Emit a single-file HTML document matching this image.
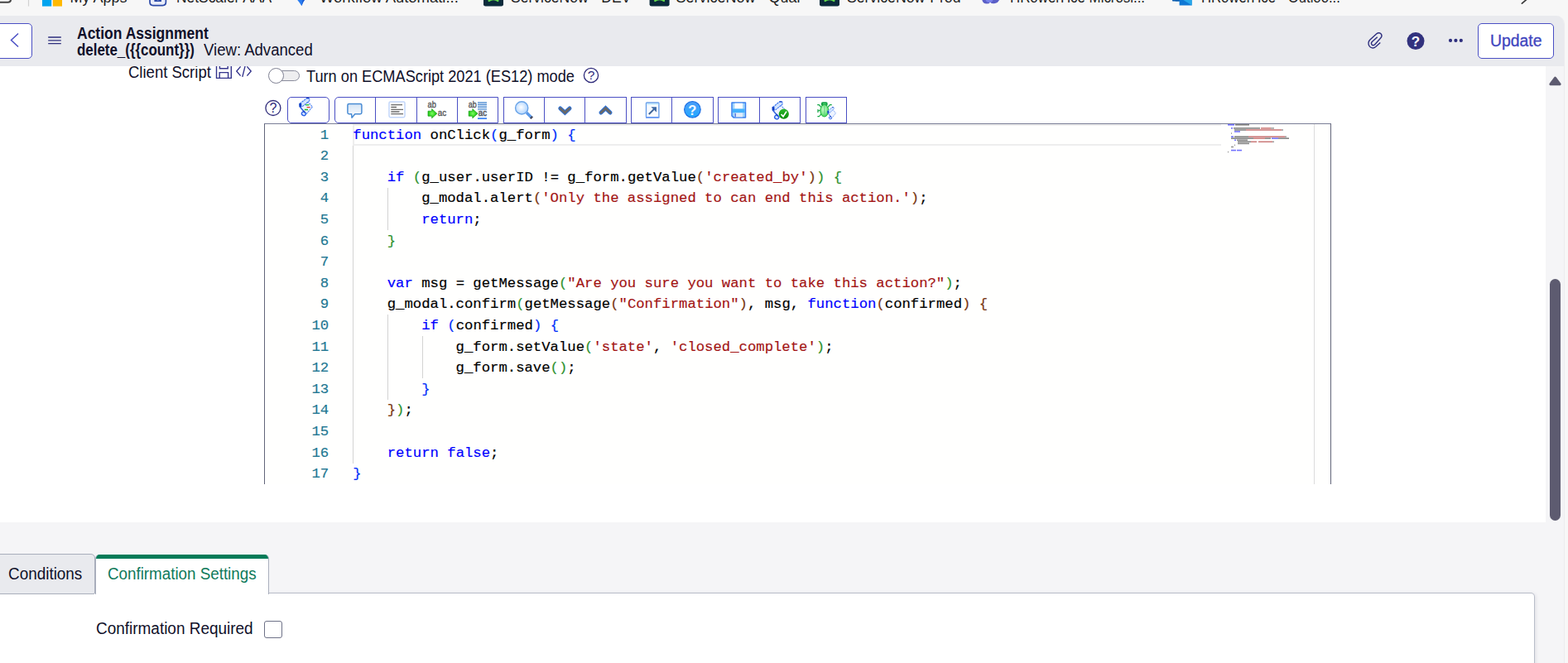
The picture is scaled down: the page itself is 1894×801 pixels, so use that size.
<!DOCTYPE html>
<html lang="en">
<head>
<meta charset="utf-8">
<title>Action Assignment</title>
<style>
*{box-sizing:border-box;margin:0;padding:0}
html,body{width:1894px;height:801px;overflow:hidden;background:#f7f7f7}
body{position:relative;font-family:"Liberation Sans",sans-serif;color:#10102a;-webkit-font-smoothing:antialiased}
.abs{position:absolute}
/* bookmark bar */
#bm{left:0;top:0;width:1894px;height:19px;background:#f7f7f7;overflow:hidden}
#bm span{position:absolute;top:-13.4px;font-size:18px;line-height:20px;color:#1f1f1f;white-space:nowrap;transform-origin:0 0}
/* page */
#page{left:0;top:19px;width:1890px;height:782px;background:#f5f5f7;border-top-right-radius:10px;overflow:hidden;border-right:1px solid #ececef}
#hdr{left:0;top:0;width:1890px;height:61px;background:#e9eaee}
#white{left:0;top:61px;width:1867px;height:551px;background:#fff}
.btn{background:#fff;border:1.4px solid #4a4fc4;border-radius:5px}
.t{white-space:nowrap;line-height:20px;font-size:19.6px;transform-origin:0 0}
/* toolbar */
.tb{top:98px;height:32px;border:1px solid #4a4fc4;background:#fff}
.tb i{position:absolute;top:0;bottom:0;width:1px;background:#4a4fc4}
/* editor */
#ed{left:319px;top:130px;width:1289px;height:436px;background:#fffffe;border-left:1px solid #62667a;border-right:1px solid #62667a;border-top:1px solid #7a7e96;overflow:hidden}
#code{left:0;top:0.7px;font-family:"Liberation Mono",monospace;font-size:17.28px;line-height:25.6px;white-space:pre;color:#000;-webkit-text-stroke:0.18px}
#code div{height:25.6px}
.ln{display:inline-block;width:77.2px;text-align:right;color:#237893;margin-right:29.1px}
.k{color:#0000ff}.s{color:#a31515}.b1{color:#0431fa}.b2{color:#319331}.b3{color:#7b3814}
.g{position:absolute;width:1px;background:#d3d3d3}
</style>
</head>
<body>
<div id="bm" class="abs">
 <svg class="abs" style="left:0;top:0" width="1894" height="19" viewBox="0 0 1894 19">
  <path d="M-2 -3 V0.6 Q-2 2.8 1 2.8 H9.6 Q13 2.8 13 -0.6 V-3" fill="none" stroke="#454545" stroke-width="2"/>
  <path d="M34.5 0V7.6" stroke="#d2d2d2" stroke-width="1.2"/>
  <rect x="51" y="-4" width="11.2" height="11.6" fill="#00a4ef"/><rect x="63.8" y="-4" width="11.2" height="11.6" fill="#ffb900"/>
  <path d="M181 -3 V2.6 Q181 6.6 185 6.6 H196.4 Q200.4 6.6 200.4 2.6 V-3" fill="#e8ecfa" stroke="#2c4aa8" stroke-width="1.7"/>
  <rect x="186.4" y="-3" width="8.6" height="5" fill="#2c4aa8"/><rect x="189.8" y="-3" width="1.8" height="3.4" fill="#e8ecfa"/>
  <path d="M357 -3 L362 3.6 L364.4 7.2 L366 3 L370 -3 Z" fill="#2a7cf0"/>
  <path d="M364.4 7.2 L366 3 L370 -3 L366 -3 Z" fill="#1a5ad0"/>
  <g id="snow"><path d="M584 -4 V5.2 Q584 7.6 586.4 7.6 H605.6 Q608 7.6 608 5.2 V-4 Z" fill="#0b2b3c"/><path d="M589.6 -4 V1 Q589.6 2.6 591 2 Q596 -1.4 601 2 Q602.4 2.6 602.4 1 V-4 Z" fill="#62d84e"/></g>
  <use href="#snow" x="200.6"/><use href="#snow" x="406"/>
  <path d="M1186 -3 Q1186 4.6 1192 4.6 Q1195 4.6 1196 2.4 Q1198 5.2 1202 4 Q1207.6 2.6 1207.6 -3 Z" fill="#5b5fc7"/>
  <path d="M1190 -3 Q1190 3 1195 3 Q1200 3 1200 -3 Z" fill="#7b83eb"/>
  <path d="M1416 -3 L1420 1.6 L1424.6 1.6 V6.4 H1439.6 V-3 Z" fill="#0f78d4"/>
  <path d="M1424.6 -3 L1439.6 6.4 V-3 Z" fill="#28a8ea"/>
  <path d="M1416 -3 V0.4 Q1416 1.6 1417.4 1.6 H1424.6 V-3 Z" fill="#0a5cad"/>
  <path d="M1846 -2.4 L1838.4 4.2" stroke="#3a3a3a" stroke-width="1.7" stroke-linecap="round"/>
 </svg>
 <span style="left:84.4px">My Apps</span>
 <span style="left:212.5px;transform:scaleX(.966)">NetScaler AAA</span>
 <span style="left:386px;transform:scaleX(1.025)">Workflow Automati...</span>
 <span style="left:616.5px;transform:scaleX(.975)">ServiceNow - DEV</span>
 <span style="left:816.5px">ServiceNow - Qual</span>
 <span style="left:1022.5px;transform:scaleX(.982)">ServiceNow-Prod</span>
 <span style="left:1220.3px;transform:scaleX(.937)">HRowerHce Microsi...</span>
 <span style="left:1451px;transform:scaleX(.927)">HRowerHce - Outloo...</span>
</div>

<div id="page" class="abs">
 <div id="white" class="abs"></div>

 <!-- field label row -->
 <div class="abs t" style="left:154.6px;top:57.8px;transform:scaleX(0.9452)" id="t5">Client Script</div>
 <div class="abs t" style="left:370.3px;top:63.1px;transform:scaleX(0.9287)" id="t6">Turn on ECMAScript 2021 (ES12) mode</div>
 <!-- label icons + toggle (under header) -->
 <svg class="abs" style="left:258px;top:54px" width="50" height="24" viewBox="258 73 50 24">
  <path d="M261.5 75 H276.4 L279.3 77.8 V94.4 H261.5 Z" fill="none" stroke="#34348c" stroke-width="1.4" stroke-linejoin="round"/>
  <path d="M265.4 75.2 V82.8 H275.2 V75.2" fill="none" stroke="#34348c" stroke-width="1.4"/>
  <path d="M265.2 94.2 V87.6 H275.6 V94.2" fill="none" stroke="#34348c" stroke-width="1.4"/>
  <path d="M290.6 80.4 L285.8 86 L290.6 91.6 M298.4 80.4 L303.2 86 L298.4 91.6 M296.2 79.4 L292.8 92.8" fill="none" stroke="#34348c" stroke-width="1.4"/>
 </svg>
 <div class="abs" style="left:330px;top:66px;width:32px;height:13px;border-radius:7px;background:#eeeef0;border:1px solid #8a8c9c"></div>
 <div class="abs" style="left:324px;top:63px;width:19.4px;height:19.4px;border-radius:50%;background:#fff;border:1.2px solid #7e8092"></div>
 <svg class="abs" style="left:702px;top:61px" width="24" height="22" viewBox="702 80 24 22">
  <circle cx="714" cy="91" r="8.6" fill="none" stroke="#2e2a7a" stroke-width="1.3"/>
  <text x="714" y="96.4" text-anchor="middle" font-family="Liberation Sans, sans-serif" font-size="15.5" fill="#2e2a7a">?</text>
 </svg>
 <!-- header -->
 <div id="hdr" class="abs"></div>
 <div class="abs btn" style="left:-6px;top:9px;width:45px;height:43px"></div>
 <svg class="abs" style="left:10px;top:19px" width="16" height="22" viewBox="0 0 16 22"><path d="M12 2.5 L3.5 10.5 L12 18.5" fill="none" stroke="#4a4fc4" stroke-width="1.5"/></svg>
 <svg class="abs" style="left:58px;top:24px" width="16" height="12" viewBox="0 0 16 12"><path d="M0.2 2H15.8M0.2 5.9H15.8M0.2 9.7H15.8" stroke="#2e2f7e" stroke-width="1.3"/></svg>
 <div class="abs t" style="left:93.2px;top:11.0px;font-weight:bold;transform:scaleX(0.8928)" id="t1">Action Assignment</div>
 <div class="abs t" style="left:93.2px;top:31.2px;font-weight:bold;transform:scaleX(0.8628)" id="t2">delete_({{count}})</div>
 <div class="abs t" style="left:246px;top:31.2px;transform:scaleX(0.9471)" id="t3">View: Advanced</div>

 <div class="abs btn" style="left:1785px;top:9px;width:92px;height:43px"></div>
 <div class="abs t" style="left:1800px;top:20.0px;color:#4045be;-webkit-text-stroke:0.3px;transform:scaleX(0.9888)" id="t4">Update</div>


 <svg class="abs" style="left:1645px;top:14px" width="130" height="34" viewBox="1645 33 130 34">
  <path d="M1667.1 51.2 L1661.3 56.6 C1658.5 59 1654.5 58.3 1653 55.5 C1651.6 52.8 1651.9 50 1653.8 47.8 L1662.4 39.9 C1664.5 38.2 1667.3 38.6 1668.4 40.6 C1669.4 42.4 1668.8 44.2 1667.5 45.4 L1660.2 53.6 C1659 54.9 1657.4 55 1656.4 53.9 C1655.4 52.7 1655.6 51.2 1656.6 50.2 L1663.4 44.2" fill="none" stroke="#2e2f7e" stroke-width="1.45" transform="translate(1660.9 48.6) scale(.95) translate(-1660.4 -48.2)"/>
  <circle cx="1710" cy="49.6" r="10.5" fill="#32327e"/>
  <text x="1710" y="56" text-anchor="middle" font-family="Liberation Sans, sans-serif" font-weight="bold" font-size="17" fill="#fff">?</text>
  <circle cx="1752" cy="48.9" r="2.1" fill="#2e2f7e"/><circle cx="1758.4" cy="48.9" r="2.1" fill="#2e2f7e"/><circle cx="1764.8" cy="48.9" r="2.1" fill="#2e2f7e"/>
 </svg>
 <!-- toolbar -->
 <div class="abs tb" style="left:347px;width:51px;border-radius:5px"></div>
 <div class="abs tb" style="left:404px;width:198px;border-top-left-radius:5px;border-bottom-left-radius:5px"><i style="left:48px"></i><i style="left:98px"></i><i style="left:147px"></i></div>
 <div class="abs tb" style="left:608px;width:149px"><i style="left:48px"></i><i style="left:97px"></i></div>
 <div class="abs tb" style="left:762px;width:100px"><i style="left:48px"></i></div>
 <div class="abs tb" style="left:867px;width:100px"><i style="left:49px"></i></div>
 <div class="abs tb" style="left:973px;width:50px"></div>

 <svg class="abs" style="left:315px;top:96px" width="715" height="36" viewBox="315 115 715 36" id="tbicons">
  <defs>
   <linearGradient id="gBub" x1="0" y1="0" x2="0" y2="1"><stop offset="0" stop-color="#d4e4f6"/><stop offset="1" stop-color="#ffffff"/></linearGradient>
   <radialGradient id="gLens" cx="0.45" cy="0.45" r="0.6"><stop offset="0" stop-color="#ffffff"/><stop offset="1" stop-color="#a8d0ff"/></radialGradient>
   <linearGradient id="gHelp" x1="0" y1="0" x2="0" y2="1"><stop offset="0" stop-color="#4a9cf8"/><stop offset="0.5" stop-color="#3aa4fc"/><stop offset="1" stop-color="#20a8ff"/></linearGradient>
   <radialGradient id="gArr" cx="0.45" cy="0.5" r="0.6"><stop offset="0" stop-color="#7cff60"/><stop offset="0.6" stop-color="#30d020"/><stop offset="1" stop-color="#0c9a0c"/></radialGradient>
   <radialGradient id="gBug" cx="0.45" cy="0.4" r="0.7"><stop offset="0" stop-color="#d8fad8"/><stop offset="0.55" stop-color="#7ce88a"/><stop offset="1" stop-color="#18c030"/></radialGradient>
   <linearGradient id="gChk" x1="0" y1="0" x2="0" y2="1"><stop offset="0" stop-color="#2eb82e"/><stop offset="1" stop-color="#068a06"/></linearGradient>
   <linearGradient id="gRoll" x1="0" y1="0" x2="1" y2="1"><stop offset="0" stop-color="#b8d4ff"/><stop offset="1" stop-color="#eef5ff"/></linearGradient>
   <g id="scroll">
    <path d="M10.5 4.5 L16.5 11 L7.5 21.5 L3 16 L1 10.5 Z" fill="#eef4ff"/>
    <path d="M10.5 4.5 L16.5 11 L7.5 21.5" fill="none" stroke="#5a8cf4" stroke-width="1.1" stroke-dasharray="2.2 0.8"/>
    <path d="M0.8 10.5 L6 16.5" fill="none" stroke="#2858d8" stroke-width="1.3"/>
    <path d="M1.2 7.2 L9.2 0.8 Q11.2 -0.2 12.6 1.4 Q13.6 3 12 4.4 L4.4 10.6 Q2.4 11 1.2 10.4 Z" fill="url(#gRoll)" stroke="#3a74f0" stroke-width="1.1" stroke-dasharray="2.4 0.7"/>
    <path d="M0.3 6.8 L3.2 7 L3.2 11.4 L0.3 10.8 Z" fill="#0c3cc4"/>
    <path d="M9.3 0.6 L12.3 0.6" stroke="#0c3cc4" stroke-width="1.2"/>
    <ellipse cx="5.8" cy="19.4" rx="2.5" ry="2.2" transform="rotate(25 5.8 19.4)" fill="#cfe0ff" stroke="#2a62e8" stroke-width="1.3"/>
    <path d="M5.4 16 L7.8 18" stroke="#1c48c8" stroke-width="1.6"/>
   </g>
  </defs>
  <!-- help outline -->
  <circle cx="329.9" cy="130.5" r="9" fill="none" stroke="#2e2a7a" stroke-width="1.3"/>
  <text x="329.9" y="136" text-anchor="middle" font-family="Liberation Sans, sans-serif" font-size="16" fill="#2e2a7a">?</text>
  <!-- 1 script -->
  <use href="#scroll" x="361" y="118"/>
  <path d="M369.2 126.8H373.4" stroke="#36c436" stroke-width="1.5"/>
  <path d="M370.6 129.6H374.6" stroke="#e83a20" stroke-width="1.4"/>
  <path d="M367.8 132.4H372" stroke="#22b822" stroke-width="1.5"/>
  <!-- 2 comment -->
  <path d="M421.6 125.4 H435.2 Q436.9 125.4 436.9 127.1 V136 Q436.9 137.7 435.2 137.7 H428.8 L425 142.2 L424.6 137.7 H421.6 Q419.9 137.7 419.9 136 V127.1 Q419.9 125.4 421.6 125.4 Z" fill="url(#gBub)" stroke="#4a8cd4" stroke-width="1.5" stroke-linejoin="round"/>
  <!-- 3 format -->
  <rect x="470" y="122.9" width="19" height="18.8" rx="1.6" fill="#fff" stroke="#c2d6fa" stroke-width="1.5"/>
  <path d="M472.3 126.6H486M472.3 129.5H479M472.3 132.3H487M472.3 135H482.5M472.3 137.7H487" stroke="#6a6a6a" stroke-width="1.3"/>
  <!-- 4 replace -->
  <g font-family="Liberation Sans, sans-serif" font-size="11" fill="#555" stroke="#555" stroke-width=".35">
   <text x="516.6" y="130" textLength="10.3" lengthAdjust="spacingAndGlyphs">ab</text>
   <text x="528.8" y="139.8" textLength="10.3" lengthAdjust="spacingAndGlyphs">ac</text>
  </g>
  <path d="M517 134.2 H521.6 V131.6 L527.8 137.2 L521.6 142.7 V140.2 H517 Z" fill="url(#gArr)" stroke="#12a012" stroke-width="0.7" stroke-linejoin="round"/>
  <!-- 5 replace all -->
  <rect x="577" y="123" width="11" height="10.4" fill="#cfe0f4"/>
  <path d="M577 123.8H588M577 126.4H588M577 129.2H588M577 132H588" stroke="#5b94d4" stroke-width="1.2"/>
  <rect x="577" y="133.4" width="11" height="9.4" fill="#e4eefa"/>
  <path d="M577 143.2H588" stroke="#2a7af5" stroke-width="1.4"/>
  <g font-family="Liberation Sans, sans-serif" font-size="11" fill="#555" stroke="#555" stroke-width=".35">
   <text x="565.8" y="130" textLength="10" lengthAdjust="spacingAndGlyphs">ab</text>
   <text x="577.8" y="139.8" textLength="10.2" lengthAdjust="spacingAndGlyphs" fill="#4a4a4a">ac</text>
  </g>
  <path d="M566.2 134.2 H570.8 V131.6 L577 137.2 L570.8 142.7 V140.2 H566.2 Z" fill="url(#gArr)" stroke="#12a012" stroke-width="0.7" stroke-linejoin="round"/>
  <!-- 6 search -->
  <path d="M636 136 L642.2 142.2" stroke="#5a98e8" stroke-width="3.4" stroke-linecap="butt"/>
  <path d="M641.2 141.2 L642.8 142.8" stroke="#4a4a5a" stroke-width="3.4"/>
  <circle cx="630.2" cy="130.4" r="7.6" fill="url(#gLens)" stroke="#6aa4e8" stroke-width="1.4"/>
  <!-- 7 down 8 up -->
  <path d="M676.8 131 L682.4 136.2 L688 131" fill="none" stroke="#2e72d8" stroke-width="5" stroke-linejoin="miter" stroke-linecap="round"/>
  <path d="M676.8 131 L682.4 136.2 L688 131" fill="none" stroke="#686868" stroke-width="3" stroke-linejoin="miter" stroke-linecap="round"/>
  <path d="M726 136 L731.5 130.8 L737 136" fill="none" stroke="#2e72d8" stroke-width="5" stroke-linejoin="miter" stroke-linecap="round"/>
  <path d="M726 136 L731.5 130.8 L737 136" fill="none" stroke="#686868" stroke-width="3" stroke-linejoin="miter" stroke-linecap="round"/>
  <!-- 9 popout -->
  <rect x="780.5" y="124" width="15.4" height="17.8" rx="0.8" fill="#f8fbff" stroke="#6aa0ea" stroke-width="1.4"/>
  <path d="M781.2 125.7H795.2" stroke="#c4ecff" stroke-width="1.6"/>
  <path d="M780 141.9H796.4" stroke="#6a98f6" stroke-width="1.5"/>
  <path d="M783.8 138 L790.5 131.4" stroke="#3e6498" stroke-width="2"/>
  <path d="M786.4 129.2 H793 V135.6 Z" fill="#3e6aa6"/>
  <!-- 10 help -->
  <circle cx="836.4" cy="132.3" r="9.8" fill="url(#gHelp)" stroke="#1c6ee4" stroke-width="1.2"/>
  <text x="836.4" y="138.6" text-anchor="middle" font-family="Liberation Sans, sans-serif" font-weight="bold" font-size="16.5" fill="#f4faff">?</text>
  <!-- 11 save -->
  <path d="M884 123.9 H900.5 V141.9 H886 L884 139.9 Z" fill="#a4d6fa" stroke="#3a80f0" stroke-width="1.5" stroke-linejoin="round"/>
  <rect x="887.4" y="124.7" width="9.6" height="6.8" fill="#fff"/>
  <rect x="885" y="131.5" width="14.6" height="4.6" fill="#44b2fe"/>
  <rect x="887.6" y="136.4" width="9.4" height="5" fill="#e2ecfa"/>
  <rect x="887.6" y="136.8" width="1.4" height="4.6" fill="#5a7ae4"/>
  <!-- 12 script check -->
  <use href="#scroll" x="932.3" y="122.2"/>
  <circle cx="946.8" cy="137.7" r="6.1" fill="url(#gChk)"/>
  <path d="M943.6 138 L946 140.8 L950 134.6" fill="none" stroke="#fff" stroke-width="1.7"/>
  <!-- 13 bug -->
  <g stroke="#18a848" stroke-width="1.2" fill="none">
   <path d="M987.2 126.6H989.8M1002 126.6H1004.8M987.4 140.6H990M989.6 127 L992 129.6M1002.2 127 L999.8 129.6M988 132 V136 M988.4 134 L991 133M990 140.2 L992 137.6"/>
  </g>
  <rect x="992" y="123.2" width="7.6" height="5" rx="1.6" fill="#14a044"/>
  <path d="M994 125.4H997.8" stroke="#5ad87a" stroke-width="0.9"/>
  <ellipse cx="995.8" cy="133.8" rx="5" ry="7.2" fill="url(#gBug)" stroke="#18b038" stroke-width="0.9"/>
  <path d="M995.8 128 V140" stroke="#68d880" stroke-width="1.3"/>
  <g transform="translate(999.3 129.2) scale(0.62 0.68)"><use href="#scroll"/></g>
 </svg>

 <!-- editor -->
 <div id="ed" class="abs">
  <div class="abs" style="left:106.3px;top:0;width:1048.7px;height:25.6px;border:2px solid #eeeeee;border-right:0"></div>
  <div class="g" style="left:106px;top:25.6px;height:384px"></div>
  <div class="g" style="left:148px;top:76.8px;height:51.2px"></div>
  <div class="g" style="left:148px;top:230.4px;height:102.4px"></div>
  <div class="g" style="left:190px;top:256px;height:51.2px"></div>
  <div class="abs" style="left:1267px;top:0;width:1px;height:436px;background:#dcdcdc"></div>
  <svg class="abs" style="left:1163px;top:0" width="80" height="36" viewBox="0 0 80 36">
   <g opacity=".55">
   <rect x="0" y="0" width="8" height="1.6" fill="#0000ff"/><rect x="9" y="0" width="17" height="1.6" fill="#222"/>
   <rect x="4" y="4.1" width="2" height="1.6" fill="#0000ff"/><rect x="7" y="4.1" width="32" height="1.6" fill="#222"/><rect x="40" y="4.1" width="12" height="1.6" fill="#a31515"/><rect x="52" y="4.1" width="4" height="1.6" fill="#555"/>
   <rect x="8" y="6.2" width="14" height="1.6" fill="#222"/><rect x="22" y="6.2" width="43" height="1.6" fill="#a31515"/><rect x="65" y="6.2" width="2" height="1.6" fill="#555"/>
   <rect x="8" y="8.2" width="7" height="1.6" fill="#0000ff"/>
   <rect x="4" y="10.3" width="1" height="1.6" fill="#444"/>
   <rect x="4" y="14.4" width="3" height="1.6" fill="#0000ff"/><rect x="8" y="14.4" width="17" height="1.6" fill="#222"/><rect x="25" y="14.4" width="44" height="1.6" fill="#a31515"/><rect x="69" y="14.4" width="2" height="1.6" fill="#555"/>
   <rect x="4" y="16.4" width="27" height="1.6" fill="#222"/><rect x="31" y="16.4" width="14" height="1.6" fill="#a31515"/><rect x="45" y="16.4" width="7" height="1.6" fill="#222"/><rect x="53" y="16.4" width="8" height="1.6" fill="#0000ff"/><rect x="61" y="16.4" width="13" height="1.6" fill="#222"/>
   <rect x="8" y="18.5" width="2" height="1.6" fill="#0000ff"/><rect x="11" y="18.5" width="13" height="1.6" fill="#222"/>
   <rect x="12" y="20.5" width="16" height="1.6" fill="#222"/><rect x="28" y="20.5" width="7" height="1.6" fill="#a31515"/><rect x="37" y="20.5" width="17" height="1.6" fill="#a31515"/><rect x="54" y="20.5" width="2" height="1.6" fill="#555"/>
   <rect x="12" y="22.6" width="14" height="1.6" fill="#222"/>
   <rect x="8" y="24.6" width="1" height="1.6" fill="#444"/>
   <rect x="4" y="26.7" width="3" height="1.6" fill="#444"/>
   <rect x="4" y="30.8" width="6" height="1.6" fill="#0000ff"/><rect x="11" y="30.8" width="6" height="1.6" fill="#0000ff"/>
   <rect x="0" y="32.8" width="1" height="1.6" fill="#444"/>
   </g>
  </svg>
  <div id="code" class="abs"><div><span class="ln">1</span><span class="k">function</span> onClick<span class="b1">(</span>g_form<span class="b1">)</span> <span class="b1">{</span></div><div><span class="ln">2</span></div><div><span class="ln">3</span>    <span class="k">if</span> <span class="b2">(</span>g_user.userID != g_form.getValue<span class="b3">(</span><span class="s">'created_by'</span><span class="b3">)</span><span class="b2">)</span> <span class="b2">{</span></div><div><span class="ln">4</span>        g_modal.alert<span class="b3">(</span><span class="s">'Only the assigned to can end this action.'</span><span class="b3">)</span>;</div><div><span class="ln">5</span>        <span class="k">return</span>;</div><div><span class="ln">6</span>    <span class="b2">}</span></div><div><span class="ln">7</span></div><div><span class="ln">8</span>    <span class="k">var</span> msg = getMessage<span class="b2">(</span><span class="s">"Are you sure you want to take this action?"</span><span class="b2">)</span>;</div><div><span class="ln">9</span>    g_modal.confirm<span class="b2">(</span>getMessage<span class="b3">(</span><span class="s">"Confirmation"</span><span class="b3">)</span>, msg, <span class="k">function</span><span class="b3">(</span>confirmed<span class="b3">)</span> <span class="b3">{</span></div><div><span class="ln">10</span>        <span class="k">if</span> <span class="b1">(</span>confirmed<span class="b1">)</span> <span class="b1">{</span></div><div><span class="ln">11</span>            g_form.setValue<span class="b2">(</span><span class="s">'state'</span>, <span class="s">'closed_complete'</span><span class="b2">)</span>;</div><div><span class="ln">12</span>            g_form.save<span class="b2">()</span>;</div><div><span class="ln">13</span>        <span class="b1">}</span></div><div><span class="ln">14</span>    <span class="b3">}</span><span class="b2">)</span>;</div><div><span class="ln">15</span></div><div><span class="ln">16</span>    <span class="k">return</span> <span class="k">false</span>;</div><div><span class="ln">17</span><span class="b1">}</span></div></div>
 </div>

 <!-- tabs -->
 <div class="abs" style="left:0;top:697px;width:1854px;height:90px;background:#fff;border:1px solid #b9bdc9;border-left:0;border-top-right-radius:5px;box-shadow:1px 1px 4px rgba(60,60,90,.12)"></div>
 <div class="abs" style="left:-2px;top:650px;width:117px;height:49px;background:#e9eaee;border:1px solid #a9aebc;border-radius:0 5px 2px 0"></div>
 <div class="abs" style="left:115px;top:651px;width:210px;height:48px;background:#fff;border-left:1px solid #a9aebc;border-right:1px solid #a9aebc;border-radius:5px 5px 0 0;overflow:hidden"><div style="height:5px;background:#007b58"></div></div>
 <div class="abs t" style="left:10.4px;top:664.0px;transform:scaleX(0.9645)" id="t7">Conditions</div>
 <div class="abs t" style="left:130px;top:664.0px;color:#0e7a5b;transform:scaleX(0.9587)" id="t8">Confirmation Settings</div>
 <div class="abs t" style="left:116px;top:729.8px;transform:scaleX(0.9674)" id="t9">Confirmation Required</div>
 <div class="abs" style="left:319px;top:731px;width:22px;height:21px;border:1px solid #6d7187;border-radius:3px;background:#fff"></div>

 <!-- scrollbar -->
 <div class="abs" style="left:1872px;top:318px;width:13px;height:292px;border-radius:7px;background:#5d5b70"></div>
 <svg class="abs" style="left:1871px;top:73px" width="15" height="12" viewBox="0 0 15 12"><path d="M7.5 2.1 L13.1 9.7 H1.9 Z" fill="#5d5b70" stroke="#5d5b70" stroke-width="3" stroke-linejoin="round"/></svg>
</div>
</body>
</html>
